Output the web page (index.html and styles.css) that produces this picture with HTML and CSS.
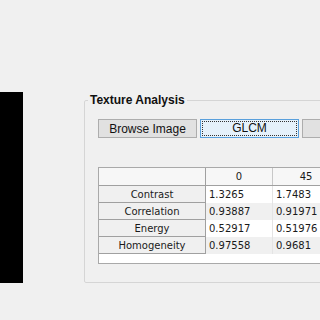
FILE: index.html
```html
<!DOCTYPE html>
<html lang="en">
<head>
    <meta charset="utf-8">
    <title>Texture Analysis</title>
    <link rel="stylesheet" href="styles.css">
</head>
<body>
    <div class="window">
        <div class="preview"></div>
        <fieldset class="group">
            <legend>Texture Analysis</legend>
            <div class="buttons">
                <button class="btn">Browse Image</button>
                <button class="btn focus"><span>GLCM</span></button>
                <button class="btn"></button>
            </div>
            <div class="grid">
                <table>
                    <tr class="head">
                        <th class="rowhead"></th>
                        <th>0</th>
                        <th>45</th>
                    </tr>
                    <tr>
                        <th class="rowhead">Contrast</th>
                        <td>1.3265</td>
                        <td>1.7483</td>
                    </tr>
                    <tr class="alt">
                        <th class="rowhead">Correlation</th>
                        <td>0.93887</td>
                        <td>0.91971</td>
                    </tr>
                    <tr>
                        <th class="rowhead">Energy</th>
                        <td>0.52917</td>
                        <td>0.51976</td>
                    </tr>
                    <tr class="alt">
                        <th class="rowhead">Homogeneity</th>
                        <td>0.97558</td>
                        <td>0.9681</td>
                    </tr>
                </table>
            </div>
        </fieldset>
    </div>
</body>
</html>
```

FILE: styles.css
```css
html, body {
    margin: 0;
    width: 320px;
    height: 320px;
    overflow: hidden;
    background: #f0f0f0;
    font-family: "DejaVu Sans", "Liberation Sans", sans-serif;
}

.window {
    display: flex;
    align-items: flex-start;
    width: 320px;
    height: 320px;
    overflow: hidden;
}

.preview {
    flex: none;
    width: 23px;
    height: 191px;
    margin-top: 92px;
    background: #000;
}

.group {
    flex: none;
    width: 300px;
    height: 188px;
    margin: 93px 0 0 61px;
    padding: 0 0 0 13px;
    border: 1px solid #d5d5d5;
    border-radius: 2px;
}

.group legend {
    padding: 0 2px;
    margin-left: -10px;
    font-family: "Liberation Sans", Arial, sans-serif;
    font-size: 12px;
    font-weight: bold;
    color: #111;
}

.buttons {
    display: flex;
    gap: 3px;
    margin-top: 12px;
}

.btn {
    flex: none;
    width: 99px;
    height: 19px;
    padding: 0;
    background: #e1e1e1;
    border: 1px solid #adadad;
    font-family: "Liberation Sans", Arial, sans-serif;
    font-size: 12px;
    color: #111;
}

.btn.focus {
    background: #e5f1fb;
    border-color: #5aa0dc;
    padding: 1px;
}

.btn.focus span {
    display: block;
    height: 13px;
    line-height: 13px;
    border: 1px dotted #333;
}

.grid {
    margin-top: 29px;
    width: 260px;
    height: 95px;
    background: #fff;
    border: 1px solid #a9a9a9;
    border-right: none;
}

.grid table {
    border-collapse: collapse;
    font-family: "DejaVu Sans", sans-serif;
    font-size: 10px;
    color: #1a1a1a;
}

.grid th, .grid td {
    height: 16px;
    padding: 0 3px;
    white-space: nowrap;
}

.grid th {
    font-weight: normal;
    text-align: center;
    background: #f0f0f0;
    border: 1px solid #a0a0a0;
    border-top: none;
    border-left: none;
}

.grid .head th {
    height: 17px;
    background: #f7f7f7;
}

.grid .head th:not(.rowhead) {
    width: 60px;
    border-color: #c8c8c8;
    border-bottom-color: #a0a0a0;
}

.grid .rowhead {
    width: 100px;
}

.grid td {
    text-align: left;
    border-right: 1px solid #e4e4e4;
    background: #fff;
}

.grid .alt td {
    background: #f0f0f0;
}
```
